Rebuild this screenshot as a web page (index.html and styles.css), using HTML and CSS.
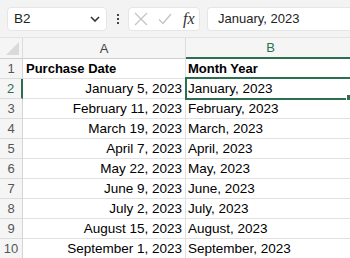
FILE: index.html
```html
<!DOCTYPE html>
<html lang="en">
  <head>
    <meta charset="UTF-8" />
    <meta name="viewport" content="width=device-width, initial-scale=1.0" />
    <title>Month Year</title>
    <link rel="stylesheet" href="styles.css">
  </head>
  <body>
    <div class="toolbar">
      <div class="name-box">
        <span>B2</span>
        <svg class="chevron" width="10" height="6" viewBox="0 0 10 6"><path d="M1 1l4 4 4-4" fill="none" stroke="#333" stroke-width="1.6"/></svg>
      </div>
      <div class="dots"><i></i><i></i><i></i></div>
      <div class="edit-box">
        <svg width="14" height="14" viewBox="0 0 14 14"><path d="M1 1l12 12M13 1L1 13" stroke="#c4c4c4" stroke-width="1.3"/></svg>
        <svg width="14" height="12" viewBox="0 0 14 12"><path d="M1 6.5l4 4L13 1" fill="none" stroke="#c4c4c4" stroke-width="1.3"/></svg>
        <span class="fx">fx</span>
      </div>
      <div class="formula">January, 2023</div>
    </div>

    <div class="sheet">
      <div class="corner"></div>
      <div class="col-head">A</div>
      <div class="col-head active">B</div>

      <div class="row-head">1</div>
      <div class="cell bold">Purchase Date</div>
      <div class="cell text bold">Month Year</div>

      <div class="row-head active">2</div>
      <div class="cell">January 5, 2023</div>
      <div class="cell text selected">January, 2023<span class="handle"></span></div>

      <div class="row-head">3</div>
      <div class="cell">February 11, 2023</div>
      <div class="cell text">February, 2023</div>

      <div class="row-head">4</div>
      <div class="cell">March 19, 2023</div>
      <div class="cell text">March, 2023</div>

      <div class="row-head">5</div>
      <div class="cell">April 7, 2023</div>
      <div class="cell text">April, 2023</div>

      <div class="row-head">6</div>
      <div class="cell">May 22, 2023</div>
      <div class="cell text">May, 2023</div>

      <div class="row-head">7</div>
      <div class="cell">June 9, 2023</div>
      <div class="cell text">June, 2023</div>

      <div class="row-head">8</div>
      <div class="cell">July 2, 2023</div>
      <div class="cell text">July, 2023</div>

      <div class="row-head">9</div>
      <div class="cell">August 15, 2023</div>
      <div class="cell text">August, 2023</div>

      <div class="row-head">10</div>
      <div class="cell">September 1, 2023</div>
      <div class="cell text">September, 2023</div>
    </div>
  </body>
</html>
```

FILE: styles.css
```css
body {
  margin: 0;
  width: 350px;
  height: 258px;
  overflow: hidden;
  background: #fff;
  font-family: "Liberation Sans", Arial, sans-serif;
  color: #000;
}

/* formula bar */
.toolbar {
  height: 38px;
  box-sizing: border-box;
  border-bottom: 1px solid #e3e3e3;
  background: #f3f3f3;
  display: flex;
  align-items: center;
  padding-left: 7px;
}

.name-box {
  width: 100px;
  height: 24px;
  box-sizing: border-box;
  background: #fff;
  border: 1px solid #e6e6e6;
  border-radius: 4px;
  display: flex;
  align-items: center;
  justify-content: space-between;
  padding: 0 6px 0 6px;
  font-size: 13.5px;
  color: #222;
}

.dots {
  width: 21px;
  display: flex;
  flex-direction: column;
  align-items: center;
  gap: 2px;
}

.dots i {
  width: 2px;
  height: 2px;
  background: #444;
}

.edit-box {
  width: 72px;
  height: 24px;
  box-sizing: border-box;
  background: #fff;
  border: 1px solid #e6e6e6;
  border-radius: 4px;
  display: flex;
  align-items: center;
  gap: 10px;
  padding-left: 5px;
}

.fx {
  font-family: "Liberation Serif", serif;
  font-style: italic;
  font-size: 16px;
  color: #333;
  margin-left: 1px;
}

.formula {
  margin-left: 7px;
  flex: 1;
  height: 24px;
  box-sizing: border-box;
  background: #fff;
  border: 1px solid #e6e6e6;
  border-right: none;
  border-radius: 4px 0 0 4px;
  padding-left: 10px;
  display: flex;
  align-items: center;
  font-size: 13px;
  color: #222;
}

/* grid */
.sheet {
  display: grid;
  grid-template-columns: 23px 163px 170px;
  grid-template-rows: 21px repeat(10, 20px);
}

.corner {
  background: #f5f5f5;
  border-right: 1px solid #dcdcdc;
  border-bottom: 1px solid #cfcfcf;
  position: relative;
}

.corner::after {
  content: "";
  position: absolute;
  right: 3px;
  bottom: 3px;
  border-left: 13px solid transparent;
  border-bottom: 13px solid #dadada;
}

.col-head {
  background: #f5f5f5;
  border-right: 1px solid #dcdcdc;
  border-bottom: 1px solid #cfcfcf;
  display: flex;
  align-items: center;
  justify-content: center;
  font-size: 13px;
  color: #444;
}

.col-head.active {
  border-bottom: 2px solid #2b7050;
  color: #2b7050;
}

.row-head {
  background: #f5f5f5;
  border-right: 1px solid #d4d4d4;
  border-bottom: 1px solid #dcdcdc;
  display: flex;
  align-items: center;
  justify-content: center;
  font-size: 13px;
  color: #555;
}

.row-head.active {
  border-right: 2px solid #2b7050;
  color: #2b7050;
}

.cell {
  border-right: 1px solid #e1e1e1;
  border-bottom: 1px solid #e1e1e1;
  display: flex;
  align-items: center;
  justify-content: flex-end;
  padding: 0 3px;
  font-size: 13.5px;
  white-space: nowrap;
}

.cell.text {
  justify-content: flex-start;
  padding-left: 2px;
}

.cell.bold {
  font-weight: bold;
  font-size: 13px;
  justify-content: flex-start;
}

.cell.selected {
  position: relative;
}

.cell.selected::after {
  content: "";
  position: absolute;
  left: -1px;
  top: -2px;
  right: 0;
  bottom: -2px;
  border: 2px solid #2b7050;
  border-right: none;
}

.handle {
  position: absolute;
  left: 160px;
  bottom: -3px;
  width: 5px;
  height: 5px;
  background: #2b7050;
  border: 1px solid #fff;
  z-index: 1;
}
```
